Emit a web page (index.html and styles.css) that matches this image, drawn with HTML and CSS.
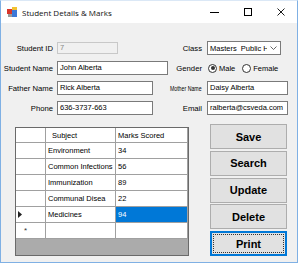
FILE: index.html
```html
<!DOCTYPE html>
<html>
<head>
<meta charset="utf-8">
<title>Student Details &amp; Marks</title>
<link rel="stylesheet" href="styles.css">
</head>
<body>
<div class="window">
  <div class="titlebar">
    <svg class="app-icon" width="10" height="10" viewBox="0 0 10 10">
      <rect x="0" y="2" width="5" height="5" fill="#d9362b"/>
      <rect x="5" y="0" width="5" height="3" fill="#f2c231"/>
      <rect x="5" y="3" width="5" height="7" fill="#3b78d8"/>
      <rect x="1" y="7" width="4" height="3" fill="#9a9a9a"/>
    </svg>
    <span class="title">Student Details &amp; Marks</span>
    <div class="caption">
      <span class="cap-btn"><svg width="9" height="9" viewBox="0 0 9 9"><line x1="0" y1="4.5" x2="9" y2="4.5" stroke="#000" stroke-width="1"/></svg></span>
      <span class="cap-btn"><svg width="8" height="8" viewBox="0 0 8 8"><rect x="0.5" y="0.5" width="7" height="7" fill="none" stroke="#000" stroke-width="1"/></svg></span>
      <span class="cap-btn"><svg width="8" height="8" viewBox="0 0 8 8"><path d="M0.5 0.5 L7.5 7.5 M7.5 0.5 L0.5 7.5" stroke="#000" stroke-width="0.9"/></svg></span>
    </div>
  </div>
  <div class="client">
    <div class="form">
      <div class="fields fields-left">
        <span class="lbl">Student ID</span>
        <div class="row-cell"><div class="tb tb-id">7</div></div>
        <span class="lbl">Student Name</span>
        <div class="row-cell"><div class="tb tb-name">John Alberta</div></div>
        <span class="lbl">Father Name</span>
        <div class="row-cell"><div class="tb tb-mid">Rick Alberta</div></div>
        <span class="lbl">Phone</span>
        <div class="row-cell"><div class="tb tb-mid">636-3737-663</div></div>
      </div>
      <div class="fields fields-right">
        <span class="lbl">Class</span>
        <div class="row-cell">
          <div class="combo">
            <span class="combo-text">Masters&nbsp; Public H</span>
            <svg class="chev" width="7" height="4" viewBox="0 0 7 4"><polyline points="0.5,0.5 3.5,3.5 6.5,0.5" fill="none" stroke="#555" stroke-width="0.9"/></svg>
          </div>
        </div>
        <span class="lbl">Gender</span>
        <div class="row-cell radios">
          <span class="radio checked"></span><span class="rtext">Male</span>
          <span class="radio"></span><span class="rtext">Female</span>
        </div>
        <span class="lbl"><span class="narrow">Mother Name</span></span>
        <div class="row-cell"><div class="tb tb-right">Daisy Alberta</div></div>
        <span class="lbl">Email</span>
        <div class="row-cell"><div class="tb tb-right">ralberta@csveda.com</div></div>
      </div>
    </div>
    <div class="main">
      <div class="dgv">
        <div class="dgv-table">
          <div class="cell rh"></div>
          <div class="cell ch ch-subject">Subject</div>
          <div class="cell ch ch-marks">Marks Scored</div>

          <div class="cell rh"></div>
          <div class="cell">Environment</div>
          <div class="cell">34</div>

          <div class="cell rh"></div>
          <div class="cell">Common Infections</div>
          <div class="cell">56</div>

          <div class="cell rh"></div>
          <div class="cell">Immunization</div>
          <div class="cell">89</div>

          <div class="cell rh"></div>
          <div class="cell">Communal Disea</div>
          <div class="cell">22</div>

          <div class="cell rh"><svg class="cur" width="4" height="7" viewBox="0 0 4 7"><polygon points="0,0 4,3.5 0,7" fill="#222"/></svg></div>
          <div class="cell">Medicines</div>
          <div class="cell selected">94</div>

          <div class="cell rh"><span class="star">*</span></div>
          <div class="cell"></div>
          <div class="cell"></div>
        </div>
      </div>
      <div class="buttons">
        <button class="btn">Save</button>
        <button class="btn">Search</button>
        <button class="btn">Update</button>
        <button class="btn">Delete</button>
        <button class="btn btn-focus">Print</button>
      </div>
    </div>
  </div>
</div>
</body>
</html>
```
FILE: styles.css
```css
html, body {
  margin: 0;
  padding: 0;
  background: #ffffff;
}

body {
  font-family: "Liberation Sans", Arial, sans-serif;
  color: #000;
}

.window {
  width: 298px;
  height: 263px;
  box-sizing: border-box;
  border: 1px solid #7fb0e4;
  border-top-color: #dbe8f6;
  background: #f0f0f0;
  display: flex;
  flex-direction: column;
}

.titlebar {
  height: 22px;
  flex: none;
  background: #ffffff;
  display: flex;
  align-items: center;
}

.app-icon {
  margin-left: 6px;
  flex: none;
}

.title {
  margin-left: 5px;
  font-family: "Open Sans", "Noto Sans", sans-serif;
  font-size: 8px;
  color: #111;
  white-space: nowrap;
}

.caption {
  margin-left: auto;
  display: flex;
  height: 100%;
}

.cap-btn {
  width: 33px;
  height: 100%;
  display: flex;
  align-items: center;
  justify-content: center;
}

.client {
  flex: 1;
  padding-top: 18px;
}

.form {
  display: flex;
}

.fields {
  display: grid;
  grid-auto-rows: 14px;
  row-gap: 6px;
  align-items: center;
}

.fields-left {
  grid-template-columns: 56px 114px;
}

.fields-right {
  grid-template-columns: 36px 81px;
}

.lbl {
  font-size: 7.7px;
  padding-right: 4px;
  white-space: nowrap;
  display: flex;
  justify-content: flex-end;
}

.fields-right .lbl {
  padding-right: 5px;
}

.narrow {
  display: inline-block;
  transform: scaleX(0.68);
  transform-origin: right center;
}

.row-cell {
  height: 14px;
  display: flex;
  align-items: center;
}

.tb {
  box-sizing: border-box;
  height: 14px;
  background: #fff;
  border: 1px solid #7a7a7a;
  font-size: 7.5px;
  line-height: 12px;
  padding-left: 2px;
  white-space: nowrap;
  overflow: hidden;
}

.tb-id {
  width: 61px;
  height: 12px;
  line-height: 10px;
  background: #f0f0f0;
  border-color: #c8c8c8;
  color: #8a8a8a;
}

.tb-name {
  width: 111px;
}

.tb-mid {
  width: 96px;
}

.tb-right {
  width: 81px;
}

.combo {
  box-sizing: border-box;
  width: 74px;
  height: 14px;
  background: #fff;
  border: 1px solid #7a7a7a;
  display: flex;
  align-items: center;
  font-size: 7.5px;
}

.combo-text {
  flex: 1;
  padding-left: 2px;
  white-space: nowrap;
  overflow: hidden;
}

.chev {
  margin: 0 3px 0 3px;
  flex: none;
}

.radios {
  font-size: 7.5px;
}

.radio {
  box-sizing: border-box;
  width: 9px;
  height: 9px;
  border: 1px solid #333;
  border-radius: 50%;
  background: #fff;
  margin-left: 1px;
  display: flex;
  align-items: center;
  justify-content: center;
  flex: none;
}

.radio.checked::after {
  content: "";
  width: 4px;
  height: 4px;
  border-radius: 50%;
  background: #333;
}

.rtext {
  margin-left: 2px;
  margin-right: 6px;
}

.main {
  display: flex;
  align-items: flex-start;
  padding-left: 14px;
  margin-top: 9px;
}

.dgv {
  margin-top: 3px;
  width: 174px;
  height: 129px;
  box-sizing: border-box;
  border: 1px solid #6a6a6a;
  background: #ababab;
  flex: none;
}

.dgv-table {
  display: grid;
  grid-template-columns: 30px 70px 72px;
  grid-template-rows: 15px repeat(6, 16px);
}

.cell {
  box-sizing: border-box;
  background: #fff;
  border-right: 1px solid #a0a0a0;
  border-bottom: 1px solid #a0a0a0;
  font-size: 7.5px;
  padding-left: 2px;
  display: flex;
  align-items: center;
  white-space: nowrap;
  overflow: hidden;
}

.ch-subject {
  padding-left: 6px;
}

.ch-marks {
  padding-left: 2px;
}

.rh {
  padding-left: 2px;
}

.star {
  margin-left: 6px;
  font-size: 8px;
  color: #333;
  line-height: 1;
}

.selected {
  background: #0078d7;
  color: #fff;
}

.buttons {
  margin-left: 21px;
  width: 77px;
  display: grid;
  grid-template-rows: repeat(5, 25px);
  row-gap: 1.75px;
}

.btn {
  box-sizing: border-box;
  width: 77px;
  height: 25px;
  margin: 0;
  padding: 0;
  background: #e1e1e1;
  border: 1px solid #adadad;
  font-family: "Liberation Sans", Arial, sans-serif;
  font-weight: bold;
  font-size: 11px;
  color: #000;
}

.btn-focus {
  border: 2px solid #0078d7;
  outline: 1px dotted #333;
  outline-offset: -4px;
}
```
